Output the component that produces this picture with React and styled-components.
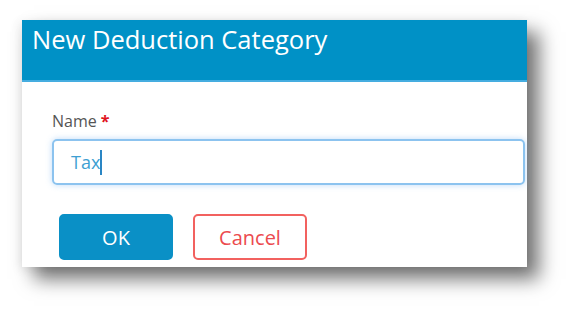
import React from 'react';
import styled, { createGlobalStyle } from 'styled-components';

const GlobalStyle = createGlobalStyle`
  body {
    margin: 0;
    background: #ffffff;
    font-family: "Open Sans", "Noto Sans", sans-serif;
  }
`;

const Page = styled.div`
  width: 580px;
  height: 318px;
  padding: 20px 0 0 22px;
  box-sizing: border-box;
`;

const Dialog = styled.section`
  width: 505px;
  height: 247px;
  background: #ffffff;
  box-shadow: 12px 12px 18px rgba(0, 0, 0, 0.55), -3px 2px 10px rgba(0, 0, 0, 0.08);
  display: flex;
  flex-direction: column;
`;

const Header = styled.header`
  height: 58px;
  background: #0091c6;
  border-bottom: 2px solid #45ade0;
  padding: 2px 0 0 10px;
  box-sizing: content-box;
  h1 {
    margin: 0;
    color: #ffffff;
    font-size: 25.5px;
    font-weight: 400;
    line-height: 34px;
  }
`;

const Body = styled.div`
  padding: 28px 0 0 30px;
  display: flex;
  flex-direction: column;
`;

const Label = styled.label`
  font-size: 16px;
  line-height: 22px;
  color: #555555;
  span {
    color: #e0141e;
    font-weight: 700;
    margin-left: 4px;
  }
`;

const Field = styled.div`
  margin-top: 7px;
  width: 473px;
  height: 46px;
  box-sizing: border-box;
  border: 2px solid #8cc3ef;
  border-radius: 5px;
  box-shadow: 0 0 6px rgba(110, 175, 240, 0.45);
  padding-left: 17px;
  display: flex;
  align-items: center;
  font-size: 18px;
  color: #3d9fd3;
`;

const Caret = styled.i`
  display: inline-block;
  width: 1.5px;
  height: 25px;
  background: #2a86c4;
`;

const Actions = styled.div`
  display: flex;
  gap: 20px;
  margin: 29px 0 0 7px;
`;

const Button = styled.button`
  width: 114px;
  height: 46px;
  border-radius: 5px;
  font-family: inherit;
  font-size: 20px;
  cursor: pointer;
  border: 2px solid ${p => (p.$danger ? '#f2615f' : '#0a90c6')};
  background: ${p => (p.$danger ? '#ffffff' : '#0a90c6')};
  color: ${p => (p.$danger ? '#ec4a4e' : '#ffffff')};
`;

export default function App() {
  return (
    <>
      <GlobalStyle />
      <Page>
        <Dialog>
          <Header>
            <h1>New Deduction Category</h1>
          </Header>
          <Body>
            <Label>
              Name<span>*</span>
            </Label>
            <Field>
              Tax<Caret />
            </Field>
            <Actions>
              <Button>OK</Button>
              <Button $danger>Cancel</Button>
            </Actions>
          </Body>
        </Dialog>
      </Page>
    </>
  );
}
